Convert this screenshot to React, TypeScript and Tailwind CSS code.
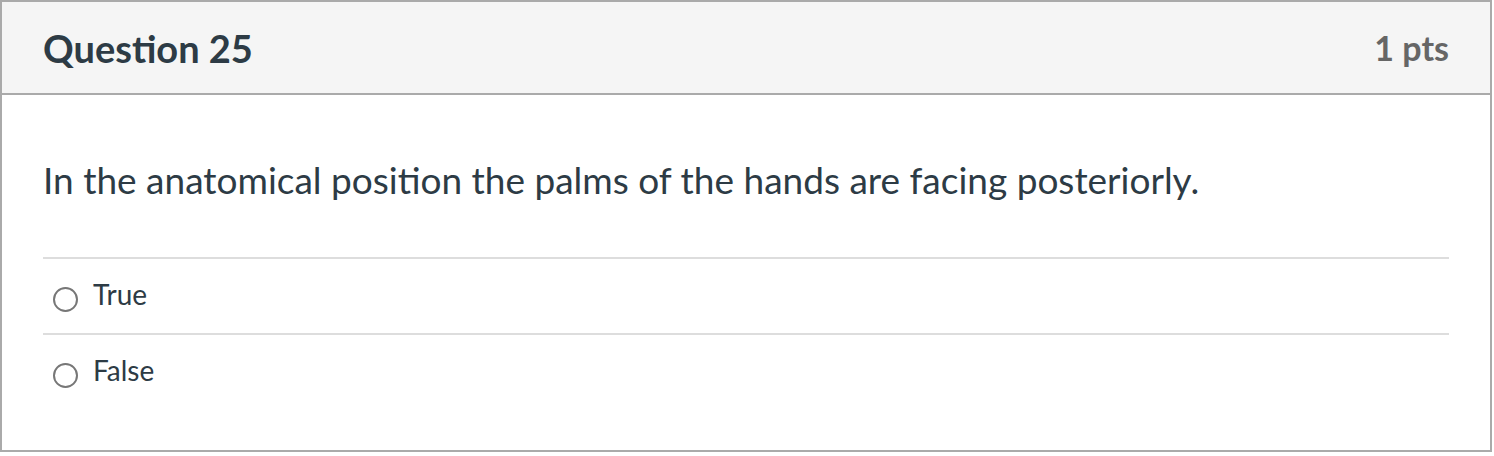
import React from 'react';

const answers = ['True', 'False'];

export default function App() {
  return (
    <div className="w-[1494px] h-[456px] bg-white font-['Lato',sans-serif] text-[#2d3b45]">
      <div className="w-[1492px] h-[452px] border-2 border-[#aaaaaa] flex flex-col">
        {/* header */}
        <div className="h-[93px] shrink-0 bg-[#f5f5f5] border-b-2 border-[#aaaaaa] flex items-center justify-between pl-[41px] pr-[41px]">
          <h2 className="text-[38px] font-bold leading-none">Question 25</h2>
          <span className="text-[34px] font-bold text-[#666666] leading-none">1 pts</span>
        </div>

        {/* body */}
        <div className="px-[41px] pt-[65px]">
          <p className="text-[37px] leading-[40px] mb-[57px]">
            In the anatomical position the palms of the hands are facing posteriorly.
          </p>
          <div>
            {answers.map((a) => (
              <label
                key={a}
                className="flex items-center h-[76px] border-t-2 border-[#dddddd] pl-[10px] pb-[4px] gap-[15px]"
              >
                <span className="w-[25px] h-[25px] mt-[10px] rounded-full border-2 border-[#777777] bg-white" />
                <span className="text-[28px]">{a}</span>
              </label>
            ))}
          </div>
        </div>
      </div>
    </div>
  );
}
